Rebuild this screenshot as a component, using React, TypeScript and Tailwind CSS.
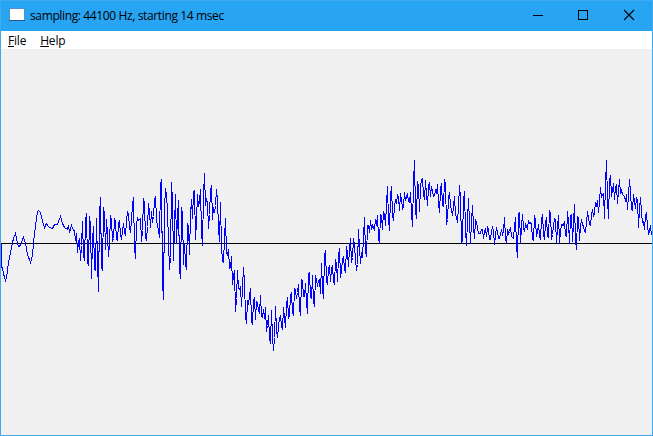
const WAVE = `
1,243 1,266 2,268 3,273 4,277 5,280 6,277 7,270 8,262 10,252 12,242 13,238 15,233 17,243 18,246 20,245 22,239 23,237
25,243 27,254 30,262 32,255 33,242 35,225 37,211 38,210 40,212 42,221 44,227 46,223 48,226 51,228 52,228 54,224
57,224 58,221 60,216 62,223 64,227 67,229 68,225 69,232 71,225 73,230 74,230 75,240 76,233 77,252 78,241 79,238
80,260 81,245 82,221 83,255 84,260 85,220 86,213 87,262 88,265 89,216 90,225 91,278 92,240 93,226 94,268 95,270
96,218 97,261 98,291 99,214 100,197 101,267 102,270 103,207 104,214 105,249 106,219 107,234 108,256 109,243
110,215 111,220 112,241 113,238 114,219 115,221 116,239 117,240 118,223 119,221 120,233 121,239 122,231 123,223
124,232 125,235 126,220 127,212 128,214 129,227 130,232 131,220 132,204 133,197 134,247 135,258 136,224 137,217
138,220 140,218 141,241 142,230 143,198 144,203 145,237 146,240 147,226 148,203 149,212 150,227 151,211 152,222
153,216 154,199 155,196 156,219 157,225 158,229 159,237 160,185 161,179 162,281 163,299 164,207 165,188 166,195
167,210 168,242 169,269 170,257 171,182 172,200 173,260 174,225 175,194 176,243 177,215 178,200 179,268 180,278
181,207 182,214 183,264 184,243 185,263 186,269 187,223 188,226 189,254 190,215 191,199 192,218 193,192 194,190
195,239 196,220 197,194 198,206 199,201 200,189 201,231 202,245 203,195 204,173 205,205 206,198 207,203 208,228
209,214 210,190 211,185 212,219 213,207 214,212 215,205 216,189 217,199 218,228 219,241 220,202 221,247 222,260
223,262 224,238 225,218 226,252 227,254 228,249 229,268 230,267 231,256 232,284 233,276 234,270 235,311 236,298
237,270 238,288 239,289 240,287 241,306 242,287 243,267 244,282 245,315 246,323 247,301 248,303 249,296 250,288
251,320 252,324 253,300 254,298 255,319 256,301 257,302 258,310 259,312 260,295 261,316 262,317 263,309 264,318
265,307 266,331 267,325 268,315 269,338 270,343 271,310 272,336 273,350 274,337 275,306 276,329 277,337 278,326
279,318 280,315 281,326 282,328 283,307 284,318 285,327 286,305 287,297 288,318 289,314 290,295 291,292 292,312
293,315 294,288 295,290 296,298 297,292 298,284 299,308 300,315 301,279 302,281 303,296 304,296 305,283 306,302
307,313 308,274 309,272 310,297 311,298 312,275 313,301 314,306 315,275 316,279 317,286 318,280 319,279 320,293
321,263 322,288 323,298 324,255 325,250 326,281 327,284 328,268 329,266 330,281 331,268 332,266 333,280 334,284
335,259 336,264 337,281 338,256 339,248 340,277 341,271 342,259 343,256 344,268 345,272 346,246 347,252 348,266
349,248 350,238 351,262 352,257 353,238 354,245 355,259 356,270 357,264 358,229 359,248 360,263 361,252 362,257
363,236 364,217 365,250 366,256 367,225 368,225 369,232 370,220 371,229 372,225 373,227 374,229 375,219 376,225
377,215 378,237 379,243 380,214 381,216 382,229 383,211 384,214 385,225 386,203 387,186 388,219 389,230 390,196
391,186 392,215 393,220 394,206 395,199 396,203 397,195 398,197 399,210 400,193 401,199 402,208 403,206 404,192
405,200 406,196 407,193 408,201 409,202 410,192 411,213 412,226 413,182 414,160 415,210 416,218 417,181 418,185
419,211 420,187 421,179 422,178 423,194 424,199 425,180 426,194 427,205 428,186 429,182 430,196 431,186 432,190
433,196 434,195 435,190 436,193 437,184 438,203 439,212 440,189 441,183 442,205 443,206 444,179 445,183 446,224
447,219 448,198 449,192 450,204 451,210 452,215 453,206 454,196 455,214 456,217 457,222 458,206 459,185 460,197
461,243 462,239 463,200 464,191 465,230 466,245 467,220 468,198 469,222 470,243 471,220 472,205 473,226 474,238
475,219 476,222 477,227 478,233 480,233 481,229 482,229 483,238 484,231 485,228 486,236 487,227 488,229 489,239
490,239 491,231 492,226 493,231 494,244 495,235 496,227 497,231 498,238 499,238 500,234 501,229 502,234 503,231
504,217 505,237 506,243 507,229 508,233 509,231 510,227 511,236 512,237 513,238 514,226 515,217 516,245 517,257
518,214 519,212 520,243 521,226 522,214 523,227 524,231 525,224 526,226 527,228 528,220 529,223 530,222 531,224
532,239 533,240 534,215 535,220 536,236 537,231 538,224 539,235 540,239 541,219 542,214 543,233 544,239 545,222
546,217 547,236 548,237 549,210 550,213 551,239 552,234 553,226 554,218 555,219 556,243 557,226 558,215 559,242
560,231 561,224 563,225 564,221 565,235 566,236 567,211 568,221 569,243 570,216 571,214 572,241 573,222 574,204
575,240 576,249 577,216 578,217 579,240 580,226 581,219 582,224 583,226 584,231 585,232 586,222 587,211 588,217
589,224 590,225 591,215 592,209 593,216 594,212 595,202 596,205 597,200 598,212 599,201 600,187 601,197 602,194
603,193 604,218 605,183 606,160 607,199 608,218 609,180 610,175 611,196 612,190 613,183 614,199 615,187 616,185
617,203 618,190 619,179 620,193 621,190 622,194 624,196 625,201 626,194 627,209 628,195 629,179 630,192 631,209
632,210 633,194 634,200 635,208 636,197 637,200 638,227 639,208 640,197 641,212 642,222 643,221 644,229 645,215
646,213 647,225 648,234 649,230 650,225 651,235`;

const MENUS = ["File", "Help"];

const TitleBar = () => {
  return (
    <header className="flex h-[30px] shrink-0 items-center bg-[#27a4f2] pl-2">
      <svg
        className="-mt-0.5"
        width="16"
        height="14"
        viewBox="0 0 16 14"
        shapeRendering="crispEdges"
      >
        <rect width="16" height="13" fill="#4a93d4" />
        <rect y="12" width="16" height="1" fill="#245a96" />
        <rect x="1" y="1" width="14" height="11" fill="#fffefa" />
      </svg>
      <span className="ml-[5px] flex-1 whitespace-nowrap text-[12px] tracking-[-0.37px] text-black">
        sampling: 44100 Hz, starting 14 msec
      </span>
      <svg width="144" height="30" viewBox="508 1 144 30" fill="none" stroke="#000">
        <path d="M533 15.5h10M578.5 10.5h9v9h-9z" shapeRendering="crispEdges" />
        <path d="M624 10l10 10M634 10l-10 10" strokeWidth="1.1" />
      </svg>
    </header>
  );
};

const MenuBar = () => {
  return (
    <nav className="flex h-[18px] shrink-0 items-center gap-[14px] bg-white pl-[7px] text-[12px] leading-[18px] tracking-[-0.2px] text-black">
      {MENUS.map((name) => (
        <span key={name} className="pt-[2px]">
          <span className="underline underline-offset-1">{name[0]}</span>
          {name.slice(1)}
        </span>
      ))}
    </nav>
  );
};

const App = () => {
  return (
    <div className="flex h-[436px] w-[653px] flex-col overflow-hidden border border-[#3eaaf0] bg-[#f0f0f0] font-['Open_Sans',sans-serif]">
      <TitleBar />
      <MenuBar />
      <svg
        width="651"
        height="386"
        viewBox="1 49 651 386"
        fill="none"
        shapeRendering="crispEdges"
      >
        <path d="M1 243.5h651" stroke="#000" />
        <polyline points={WAVE} transform="translate(0.5 0.5)" stroke="#00f" />
      </svg>
    </div>
  );
};

export default App;
